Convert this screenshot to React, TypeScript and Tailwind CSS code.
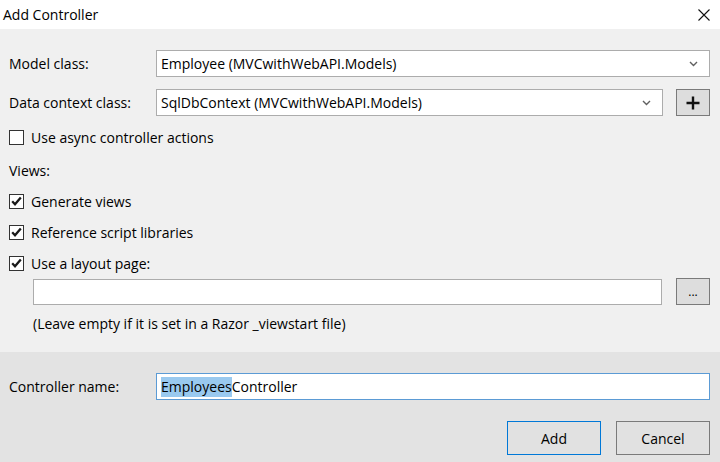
import React from "react";

const font = { fontFamily: '"Open Sans", "Noto Sans", "Liberation Sans", sans-serif' };

function Chevron() {
  return (
    <svg width="9" height="6" viewBox="0 0 9 6" className="shrink-0">
      <path d="M1 1 L4.5 4.5 L8 1" fill="none" stroke="#606060" strokeWidth="1.4" />
    </svg>
  );
}

function Combo({ text, width }: { text: string; width: string }) {
  return (
    <div className={`${width} h-[27px] bg-white border border-[#acacac] flex items-center pl-[4px] pr-[11px]`}>
      <span className="flex-1 text-[14px] text-black leading-none">{text}</span>
      <Chevron />
    </div>
  );
}

function Check({ checked }: { checked: boolean }) {
  return (
    <div className="w-[15px] h-[15px] border border-[#333333] bg-white flex items-center justify-center shrink-0">
      {checked && (
        <svg width="13" height="13" viewBox="0 0 13 13">
          <path d="M2.2 6.3 L5 9.2 L10.8 2.6" fill="none" stroke="#1a1a1a" strokeWidth="2.3" />
        </svg>
      )}
    </div>
  );
}

function CheckRow({ label, checked, h }: { label: string; checked: boolean; h: string }) {
  return (
    <div className={`${h} flex items-center gap-[7px]`}>
      <Check checked={checked} />
      <span className="text-[14px] text-black">{label}</span>
    </div>
  );
}

export default function App() {
  return (
    <div className="w-[720px] h-[462px] overflow-hidden flex flex-col bg-[#f0f0f0]" style={font}>
      <div className="h-[29px] bg-white flex items-center justify-between pl-[3px] pr-[10px] shrink-0">
        <span className="text-[14px] text-black">Add Controller</span>
        <svg width="12" height="12" viewBox="0 0 12 12">
          <path d="M0.5 0.5 L11.5 11.5 M11.5 0.5 L0.5 11.5" stroke="#111" strokeWidth="1.1" />
        </svg>
      </div>

      <div className="h-[323px] shrink-0 pl-[9px] pr-[10px] flex flex-col">
        <div className="mt-[21px] flex items-center">
          <span className="w-[147px] text-[14px] text-black">Model class:</span>
          <Combo text="Employee (MVCwithWebAPI.Models)" width="w-[554px]" />
        </div>
        <div className="mt-[12px] flex items-center">
          <span className="w-[147px] text-[14px] text-black">Data context class:</span>
          <Combo text="SqlDbContext (MVCwithWebAPI.Models)" width="w-[507px]" />
          <div className="ml-[13px] w-[34px] h-[27px] bg-[#dddddd] border border-[#7a7a7a] flex items-center justify-center">
            <svg width="14" height="14" viewBox="0 0 14 14">
              <path d="M7 0.5 V13.5 M0.5 7 H13.5" stroke="#111" strokeWidth="2.4" />
            </svg>
          </div>
        </div>
        <div className="mt-[6px]">
          <CheckRow label="Use async controller actions" checked={false} h="h-[31px]" />
        </div>
        <div className="mt-[2px] h-[31px] flex items-center text-[14px] text-black">Views:</div>
        <CheckRow label="Generate views" checked h="h-[31px]" />
        <CheckRow label="Reference script libraries" checked h="h-[31px]" />
        <CheckRow label="Use a layout page:" checked h="h-[30px]" />
        <div className="flex items-center pl-[24px]">
          <div className="w-[630px] h-[26px] bg-white border border-[#acacac]" />
          <div className="ml-[14px] w-[34px] h-[27px] bg-[#dddddd] border border-[#7a7a7a] flex items-end justify-center pb-[6px]">
            <span className="text-[12px] leading-none text-black">...</span>
          </div>
        </div>
        <div className="mt-[5px] pl-[24px] h-[26px] flex items-center text-[14px] text-black">
          (Leave empty if it is set in a Razor _viewstart file)
        </div>
      </div>

      <div className="flex-1 bg-[#e3e3e3] pl-[9px] pr-[10px] flex flex-col">
        <div className="mt-[21px] flex items-center">
          <span className="w-[147px] text-[14px] text-black">Controller name:</span>
          <div className="w-[554px] h-[27px] bg-white border border-[#5b9bd5] flex items-center pl-[4px]">
            <span className="text-[14px] text-black leading-[20px] bg-[#99c9ef]">Employees</span>
            <span className="text-[14px] text-black leading-[20px]">Controller</span>
          </div>
        </div>
        <div className="mt-[21px] flex justify-end gap-[15px]">
          <div className="w-[94px] h-[34px] bg-[#e1e1e1] border border-[#0078d7] flex items-center justify-center text-[14px] text-black">
            Add
          </div>
          <div className="w-[94px] h-[34px] bg-[#e1e1e1] border border-[#7a7a7a] flex items-center justify-center text-[14px] text-black">
            Cancel
          </div>
        </div>
      </div>
    </div>
  );
}
